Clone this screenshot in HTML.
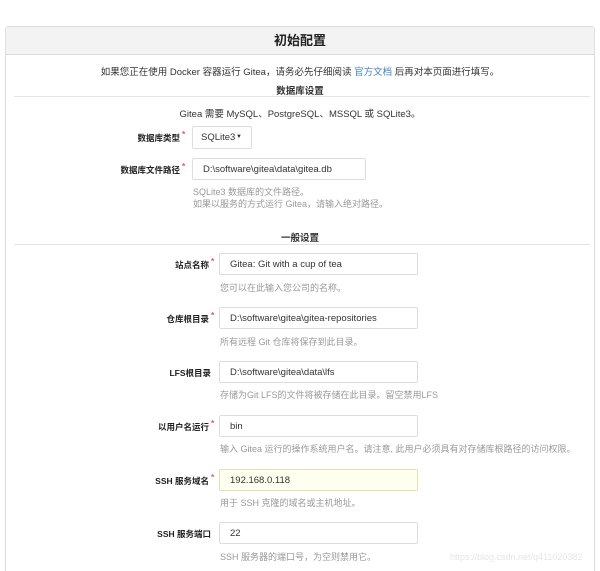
<!DOCTYPE html><html><head><meta charset="utf-8"><style>
html,body{margin:0;height:571px;overflow:hidden}
body{background:#fff;font-family:"Liberation Sans","Noto Sans CJK SC",sans-serif;color:#333;width:600px;position:relative}
.box{position:absolute;left:5px;top:26px;width:588px;height:560px;border:1px solid #ddd;border-radius:3px}
.hd{height:27px;background:#f3f3f3;border-bottom:1px solid #ddd;text-align:center;font-size:13px;font-weight:bold;line-height:28px;color:#222}
.t{position:absolute;left:0;width:600px;text-align:center;font-size:9.5px;white-space:nowrap}
.b{font-weight:bold;font-size:9.5px}
.ln{position:absolute;left:14px;width:576px;height:1px;background:#e4e4e4}
.lb{position:absolute;right:391px;font-size:8.5px;font-weight:bold;text-align:right;white-space:nowrap;color:#222}
.lb i{color:#d95c5c;font-style:normal;position:absolute;left:100%;top:-3px;margin-left:2px}
.in{position:absolute;left:219px;width:199px;height:22px;border:1px solid #ddd;border-radius:2px;box-sizing:border-box;font-size:9.5px;line-height:21px;padding-left:10px;white-space:nowrap;color:#333}
.hp{position:absolute;left:220px;font-size:9px;color:#999;white-space:nowrap;line-height:12px}
</style></head><body>
<div class="box"><div class="hd">初始配置</div></div>
<div class="t" style="top:64px">如果您正在使用 Docker 容器运行 Gitea，请务必先仔细阅读 <span style="color:#4183c4">官方文档</span> 后再对本页面进行填写。</div>
<div class="t b" style="top:83px">数据库设置</div>
<div class="ln" style="top:96px"></div>
<div class="t" style="top:106px">Gitea 需要 MySQL、PostgreSQL、MSSQL 或 SQLite3。</div>
<div class="lb" style="top:132px;right:420px">数据库类型<i>*</i></div>
<div class="in" style="top:126px;left:192px;width:60px;height:23px;padding-left:8px">SQLite3<span style="position:absolute;right:9px;top:0;font-size:6px">▼</span></div>
<div class="lb" style="top:164px;right:420px">数据库文件路径<i>*</i></div>
<div class="in" style="top:158px;left:192px;width:174px">D:\software\gitea\data\gitea.db</div>
<div class="hp" style="top:186px;left:193px">SQLite3 数据库的文件路径。<br>如果以服务的方式运行 Gitea，请输入绝对路径。</div>
<div class="t b" style="top:230px">一般设置</div>
<div class="ln" style="top:244px"></div>
<div class="lb" style="top:259px">站点名称<i>*</i></div>
<div class="in" style="top:253px">Gitea: Git with a cup of tea</div>
<div class="hp" style="top:282px">您可以在此输入您公司的名称。</div>
<div class="lb" style="top:313px">仓库根目录<i>*</i></div>
<div class="in" style="top:307px">D:\software\gitea\gitea-repositories</div>
<div class="hp" style="top:336px">所有远程 Git 仓库将保存到此目录。</div>
<div class="lb" style="top:367px;right:389px">LFS根目录</div>
<div class="in" style="top:361px">D:\software\gitea\data\lfs</div>
<div class="hp" style="top:389px">存储为Git LFS的文件将被存储在此目录。留空禁用LFS</div>
<div class="lb" style="top:421px">以用户名运行<i>*</i></div>
<div class="in" style="top:415px">bin</div>
<div class="hp" style="top:443px">输入 Gitea 运行的操作系统用户名。请注意, 此用户必须具有对存储库根路径的访问权限。</div>
<div class="lb" style="top:475px">SSH 服务域名<i>*</i></div>
<div class="in" style="top:469px;background:#fffff0;border-color:#e8e0b0">192.168.0.118</div>
<div class="hp" style="top:497px">用于 SSH 克隆的域名或主机地址。</div>
<div class="lb" style="top:528px;right:389px">SSH 服务端口</div>
<div class="in" style="top:522px">22</div>
<div class="hp" style="top:551px">SSH 服务器的端口号，为空则禁用它。</div>
<div style="position:absolute;left:450px;top:552px;font-size:9px;color:#e6e6e6;white-space:nowrap">https://blog.csdn.net/q411020382</div>
</body></html>
